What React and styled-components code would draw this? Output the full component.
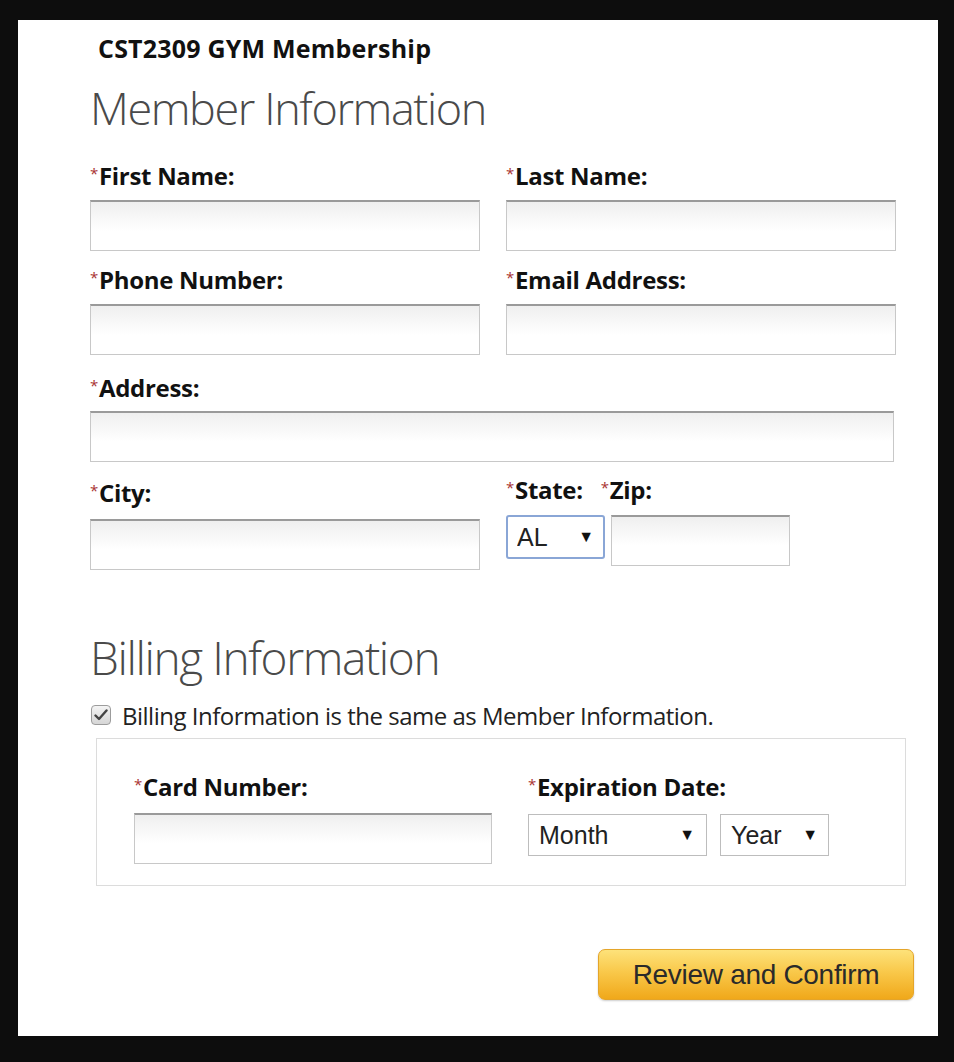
import React, { useState } from 'react';
import styled, { createGlobalStyle } from 'styled-components';

const GlobalStyle = createGlobalStyle`
  html, body {
    margin: 0;
    padding: 0;
    background: #0d0d0d;
  }
  * { box-sizing: border-box; }
`;

const Page = styled.div`
  width: 954px;
  height: 1062px;
  padding: 20px 16px 26px 18px;
  background: #0d0d0d;
`;

const Panel = styled.form`
  width: 920px;
  height: 1016px;
  background: #fff;
  padding: 12px 42px 0 72px;
  display: flex;
  flex-direction: column;
  font-family: "Open Sans", "Liberation Sans", sans-serif;
`;

const Title = styled.h1`
  margin: 0 0 0 8px;
  font-size: 25px;
  font-weight: 700;
  color: #111;
  line-height: 32px;
  letter-spacing: 0.2px;
`;

const SectionTitle = styled.h2`
  margin: ${p => p.$top || 0}px 0 0 0;
  font-size: ${p => p.$size || 45}px;
  font-weight: 300;
  letter-spacing: -1.4px;
  color: #4a4a4a;
  line-height: 56px;
`;

const Grid = styled.div`
  display: grid;
  grid-template-columns: 390px 390px;
  column-gap: 26px;
  margin-top: ${p => p.$top || 0}px;
`;

const Field = styled.div`
  display: flex;
  flex-direction: column;
  grid-column: ${p => (p.$wide ? '1 / span 2' : 'auto')};
  margin-top: ${p => p.$shift || 0}px;
  margin-bottom: ${p => p.$gap || 0}px;
`;

const Label = styled.label`
  font-size: 24px;
  font-weight: 700;
  color: #111;
  line-height: 28px;
  letter-spacing: -0.3px;
  margin-bottom: ${p => p.$gap || 10}px;
  white-space: nowrap;
`;

const Star = styled.span`
  color: #a83232;
  font-size: 15px;
  vertical-align: top;
  line-height: 22px;
  margin-right: 1px;
  font-weight: 400;
`;

const Spacer = styled.span`
  display: inline-block;
  width: ${p => p.$width}px;
`;

const TextInput = styled.input`
  width: ${p => p.$width || '100%'};
  height: ${p => p.$height || 51}px;
  border: 1px solid #c8c8c8;
  border-top: 2px solid #9a9a9a;
  background: linear-gradient(#efefef, #fff 60%);
  font-size: 18px;
  padding: 0 8px;
  outline: none;
`;

const InlineGroup = styled.div`
  display: flex;
  gap: ${p => p.$gap || 10}px;
  align-items: flex-start;
`;

const SelectWrap = styled.div`
  position: relative;
  width: ${p => p.$width}px;
  height: ${p => p.$height || 42}px;
`;

const Select = styled.select`
  appearance: none;
  width: 100%;
  height: 100%;
  border: ${p => (p.$focus ? '2px solid #8aa6d6' : '1px solid #bdbdbd')};
  border-radius: ${p => (p.$focus ? '3px' : '0')};
  background: #fff;
  font-family: "Liberation Sans", Arial, sans-serif;
  font-size: 25px;
  color: #222;
  padding: 0 0 0 ${p => (p.$focus ? 9 : 10)}px;
  outline: none;
`;

const Arrow = styled.span`
  position: absolute;
  right: ${p => p.$right || 12}px;
  top: 50%;
  transform: translateY(-55%);
  font-size: 16px;
  color: #111;
  pointer-events: none;
`;

const CheckRow = styled.label`
  display: flex;
  align-items: center;
  gap: 11px;
  height: 24px;
  margin: 18px 0 0 1px;
  font-size: 24px;
  color: #222;
  letter-spacing: -0.5px;
  white-space: nowrap;
`;

const CheckBox = styled.span`
  flex: none;
  width: 20px;
  height: 20px;
  border: 1px solid #9c9c9c;
  border-radius: 4px;
  background: linear-gradient(#f4f4f4, #d6d6d6);
  display: flex;
  align-items: center;
  justify-content: center;
`;

const BillingBox = styled.div`
  margin: 11px 0 0 6px;
  width: 810px;
  height: 148px;
  border: 1px solid #dcdcdc;
  padding: 34px 0 0 37px;
  display: flex;
  gap: 36px;
`;

const Actions = styled.div`
  display: flex;
  justify-content: flex-end;
  margin: 63px -18px 0 0;
`;

const ConfirmButton = styled.button`
  width: 316px;
  height: 51px;
  border: 1px solid #e4a52a;
  border-radius: 7px;
  background: linear-gradient(#fde27a, #f9c84a 45%, #f0a81a);
  box-shadow: 0 1px 2px rgba(0, 0, 0, 0.2);
  font-family: "Liberation Sans", Arial, sans-serif;
  font-size: 28px;
  letter-spacing: -0.3px;
  color: #2a2a2a;
  cursor: pointer;
`;

const Req = ({ children, gap }) => (
  <Label $gap={gap}>
    <Star>*</Star>
    {children}
  </Label>
);

const App = () => {
  const [same, setSame] = useState(true);

  return (
    <Page>
      <GlobalStyle />
      <Panel onSubmit={e => e.preventDefault()}>
        <Title>CST2309 GYM Membership</Title>
        <SectionTitle $top={16}>Member Information</SectionTitle>

        <Grid $top={26}>
          <Field $gap={15}>
            <Req>First Name:</Req>
            <TextInput />
          </Field>
          <Field $gap={15}>
            <Req>Last Name:</Req>
            <TextInput />
          </Field>
          <Field $gap={19}>
            <Req>Phone Number:</Req>
            <TextInput />
          </Field>
          <Field $gap={19}>
            <Req>Email Address:</Req>
            <TextInput />
          </Field>
          <Field $wide $gap={17}>
            <Req gap={9}>Address:</Req>
            <TextInput $width="804px" />
          </Field>
          <Field>
            <Req gap={12}>City:</Req>
            <TextInput />
          </Field>
          <Field $shift={-3}>
            <Label as="div" $gap={11}>
              <Star>*</Star>State:<Spacer $width={18} /><Star>*</Star>Zip:
            </Label>
            <InlineGroup $gap={6}>
              <SelectWrap $width={99} $height={44}>
                <Select $focus defaultValue="AL">
                  <option>AL</option>
                  <option>AK</option>
                  <option>NY</option>
                </Select>
                <Arrow $right={11}>▼</Arrow>
              </SelectWrap>
              <TextInput $width="179px" />
            </InlineGroup>
          </Field>
        </Grid>

        <SectionTitle $top={59} $size={46}>Billing Information</SectionTitle>
        <CheckRow onClick={() => setSame(!same)}>
          <CheckBox>
            {same && (
              <svg width="14" height="12" viewBox="0 0 14 12">
                <path d="M1.5 6.5 L5 10 L12.5 1.5" fill="none" stroke="#444" strokeWidth="2.4" strokeLinecap="round" strokeLinejoin="round" />
              </svg>
            )}
          </CheckBox>
          Billing Information is the same as Member Information.
        </CheckRow>

        <BillingBox>
          <Field>
            <Req gap={12}>Card Number:</Req>
            <TextInput $width="358px" />
          </Field>
          <Field>
            <Req gap={13}>Expiration Date:</Req>
            <InlineGroup $gap={13}>
              <SelectWrap $width={179}>
                <Select defaultValue="Month">
                  <option>Month</option>
                </Select>
                <Arrow $right={12}>▼</Arrow>
              </SelectWrap>
              <SelectWrap $width={109}>
                <Select defaultValue="Year">
                  <option>Year</option>
                </Select>
                <Arrow $right={11}>▼</Arrow>
              </SelectWrap>
            </InlineGroup>
          </Field>
        </BillingBox>

        <Actions>
          <ConfirmButton type="submit">Review and Confirm</ConfirmButton>
        </Actions>
      </Panel>
    </Page>
  );
};

export default App;
